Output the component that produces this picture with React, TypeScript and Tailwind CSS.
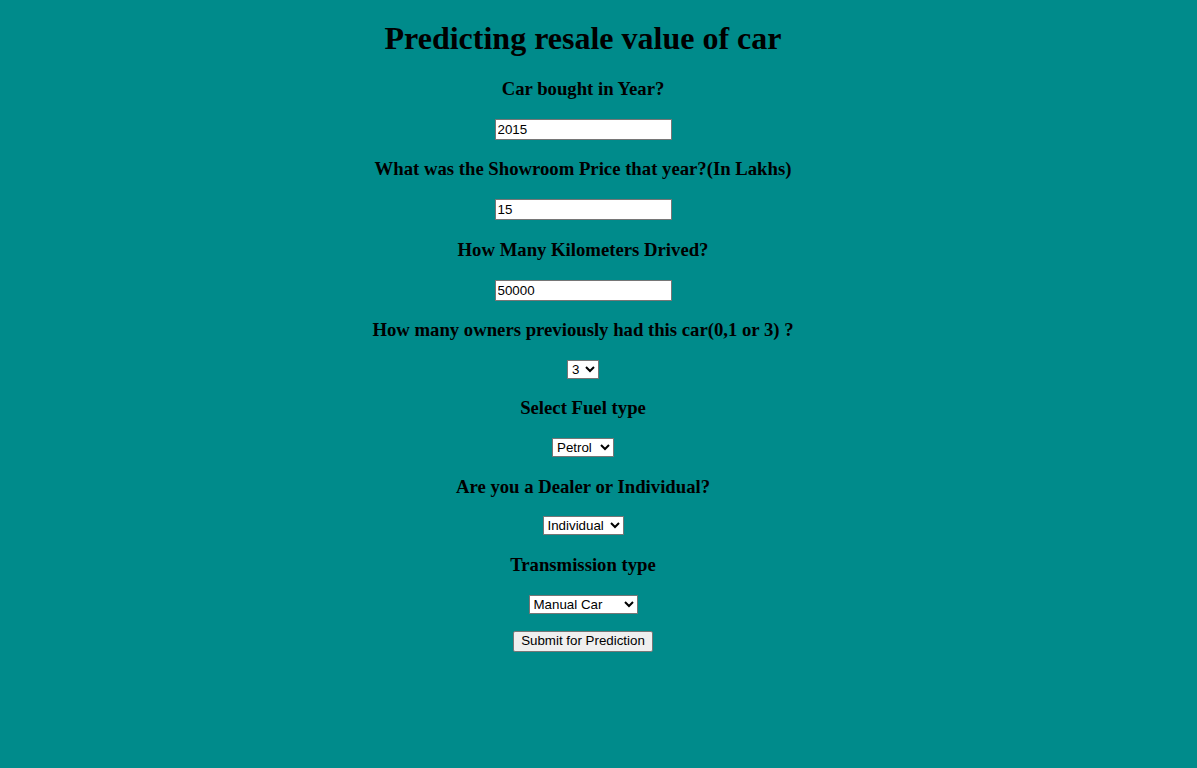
import React from 'react';

const labelCls =
  'my-[18.72px] text-[18.72px] font-bold leading-[normal] text-black';
const inputCls =
  "w-[177px] h-[21px] border border-[#767676] bg-white px-[2px] py-[1px] text-[13.33px] text-black align-middle font-['Liberation_Sans',sans-serif]";
const selectCls =
  "h-[19px] border border-[#767676] bg-white text-[13.33px] text-black align-top rounded-none font-['Liberation_Sans',sans-serif]";
const rowCls = 'leading-[normal]';
const selectRowCls = 'h-[18.8px] leading-[19px]';

export default function App() {
  return (
    <div className="flow-root min-h-screen bg-[#008B8B] font-['Liberation_Serif',serif] leading-[normal]">
      <form className="w-[1166px] text-center" onSubmit={(e) => e.preventDefault()}>
        <h1 className="mt-[19.5px] mb-[21.44px] text-[32px] font-bold leading-[normal] text-black">
          Predicting resale value of car
        </h1>

        <h3 className={labelCls}>Car bought in Year?</h3>
        <div className={rowCls}>
          <input className={inputCls} type="text" defaultValue="2015" />
        </div>

        <h3 className={labelCls}>What was the Showroom Price that year?(In Lakhs)</h3>
        <div className={rowCls}>
          <input className={inputCls} type="text" defaultValue="15" />
        </div>

        <h3 className={labelCls}>How Many Kilometers Drived?</h3>
        <div className={rowCls}>
          <input className={inputCls} type="text" defaultValue="50000" />
        </div>

        <h3 className={labelCls}>How many owners previously had this car(0,1 or 3) ?</h3>
        <div className={selectRowCls}>
          <select className={`${selectCls} w-[32px]`} defaultValue="3">
            <option value="0">0</option>
            <option value="1">1</option>
            <option value="3">3</option>
          </select>
        </div>

        <h3 className={labelCls}>Select Fuel type</h3>
        <div className={selectRowCls}>
          <select className={`${selectCls} w-[62px]`} defaultValue="Petrol">
            <option>Petrol</option>
            <option>Diesel</option>
            <option>CNG</option>
          </select>
        </div>

        <h3 className={labelCls}>Are you a Dealer or Individual?</h3>
        <div className={selectRowCls}>
          <select className={`${selectCls} w-[81px]`} defaultValue="Individual">
            <option>Dealer</option>
            <option>Individual</option>
          </select>
        </div>

        <h3 className={labelCls}>Transmission type</h3>
        <div className={selectRowCls}>
          <select className={`${selectCls} w-[109px]`} defaultValue="Manual Car">
            <option>Manual Car</option>
            <option>Automatic Car</option>
          </select>
        </div>

        <div className="mt-[17.2px] leading-[normal]">
          <button
            type="submit"
            className="h-[21px] w-[140px] rounded-[2px] border border-[#767676] bg-[#efefef] px-[6px] text-[13.33px] leading-none text-black font-['Liberation_Sans',sans-serif]"
          >
            Submit for Prediction
          </button>
        </div>
      </form>
    </div>
  );
}
